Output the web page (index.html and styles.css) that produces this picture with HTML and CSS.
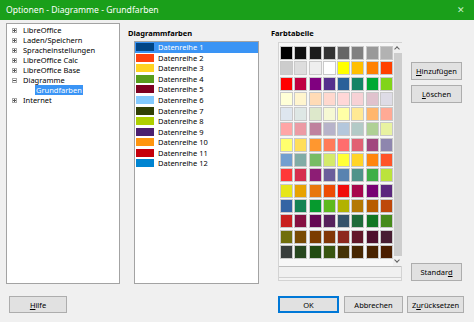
FILE: index.html
```html
<!DOCTYPE html>
<html lang="de">
<head>
<meta charset="utf-8">
<title>Optionen - Diagramme - Grundfarben</title>
<link rel="stylesheet" href="styles.css">
</head>
<body>
<div class="window">
  <div class="titlebar">
    <span class="title">Optionen - Diagramme - Grundfarben</span>
    <span class="close">✕</span>
  </div>
  <div class="main">
    <div class="tree">
      <div class="node"><span class="exp plus"></span><span class="lbl">LibreOffice</span></div>
      <div class="node"><span class="exp plus"></span><span class="lbl">Laden/Speichern</span></div>
      <div class="node"><span class="exp plus"></span><span class="lbl">Spracheinstellungen</span></div>
      <div class="node"><span class="exp plus"></span><span class="lbl">LibreOffice Calc</span></div>
      <div class="node"><span class="exp plus"></span><span class="lbl">LibreOffice Base</span></div>
      <div class="node"><span class="exp minus"></span><span class="lbl">Diagramme</span></div>
      <div class="node child"><span class="lbl sel">Grundfarben</span></div>
      <div class="node"><span class="exp plus"></span><span class="lbl">Internet</span></div>
    </div>
    <div class="col-series">
      <div class="grp-label">Diagrammfarben</div>
      <div class="series-list">
        <div class="srow selected"><span class="sw" style="background:#004586"></span>Datenreihe 1</div>
        <div class="srow"><span class="sw" style="background:#ff420e"></span>Datenreihe 2</div>
        <div class="srow"><span class="sw" style="background:#ffd320"></span>Datenreihe 3</div>
        <div class="srow"><span class="sw" style="background:#579d1c"></span>Datenreihe 4</div>
        <div class="srow"><span class="sw" style="background:#7e0021"></span>Datenreihe 5</div>
        <div class="srow"><span class="sw" style="background:#83caff"></span>Datenreihe 6</div>
        <div class="srow"><span class="sw" style="background:#314004"></span>Datenreihe 7</div>
        <div class="srow"><span class="sw" style="background:#aecf00"></span>Datenreihe 8</div>
        <div class="srow"><span class="sw" style="background:#4b1f6f"></span>Datenreihe 9</div>
        <div class="srow"><span class="sw" style="background:#ff950e"></span>Datenreihe 10</div>
        <div class="srow"><span class="sw" style="background:#c5000b"></span>Datenreihe 11</div>
        <div class="srow"><span class="sw" style="background:#0084d1"></span>Datenreihe 12</div>
      </div>
    </div>
    <div class="col-table">
      <div class="grp-label">Farbtabelle</div>
      <div class="table-frame">
        <div class="valueset">
          <div class="palette" id="palette"></div>
          <div class="vscroll">
            <span class="arrow up"></span>
            <span class="thumb"></span>
            <span class="arrow down"></span>
          </div>
        </div>
        <div class="strip"></div>
      </div>
    </div>
    <div class="col-buttons">
      <button class="btn"><u>H</u>inzufügen</button>
      <button class="btn"><u>L</u>öschen</button>
      <span class="spacer"></span>
      <button class="btn">Standar<u>d</u></button>
    </div>
  </div>
  <div class="footer">
    <button class="btn b-help"><u>H</u>ilfe</button>
    <span class="spacer"></span>
    <button class="btn b-ok">OK</button>
    <button class="btn b-cancel">Abbrechen</button>
    <button class="btn b-reset">Z<u>u</u>rücksetzen</button>
  </div>
</div>
<script src="app.js"></script>
</body>
</html>
```
FILE: app.js
```js
var colors = [
"000000","111111","1c1c1c","333333","666666","808080","999999","b2b2b2",
"cccccc","dddddd","eeeeee","ffffff","ffff00","ffbf00","ff8000","ff4000",
"ff0000","bf0041","800080","55308d","2a6099","158466","00a933","81d41a",
"ffffd7","fff5ce","ffdbb6","ffd8ce","ffd7d7","f7d1d5","e0c2cd","dedce6",
"dee6ef","dee7e5","dde8cb","f6f9d4","ffffa6","ffe994","ffb66c","ffaa95",
"ffa6a6","ec9ba4","bf819e","b7b3ca","b4c7dc","b3cac7","afd095","e8f2a1",
"ffff6d","ffde59","ff972f","ff7b59","ff6d6d","e16173","a1467e","8e86ae",
"729fcf","81aca6","77bc65","d4ea6b","ffff38","ffd428","ff860d","ff5429",
"ff3838","d62e4e","8d1d75","6b5e9b","5983b0","50938a","3faf46","bbe33d",
"e6e617","e8a202","e8770d","ed4c05","f10d0c","a7074b","780373","5b277d",
"3465a4","168253","069a2e","5eb91e","b2b200","b47804","b85c00","be480a",
"c9211e","861141","650953","55215b","355269","1e6a39","127622","468a1a",
"706e0c","784b04","7b3d00","813709","8d281e","611729","4e102d","481d32",
"383d3c","28471f","224b12","395511","443205","472702","492300","4b1e00"
];
var p = document.getElementById("palette");
colors.forEach(function (c) {
  var d = document.createElement("span");
  d.className = "cell";
  d.style.background = "#" + c;
  p.appendChild(d);
});
```
FILE: styles.css
```css
* { box-sizing: border-box; }
html, body { margin: 0; padding: 0; }
body {
  width: 474px;
  height: 322px;
  background: #f0f0f0;
  font-family: "Noto Sans", "Open Sans", sans-serif;
  font-size: 7.5px;
  color: #000;
  overflow: hidden;
}
.window { width: 474px; height: 322px; display: flex; flex-direction: column; }
.titlebar {
  height: 20px;
  background: #1a9f1a;
  color: #fff;
  display: flex;
  align-items: center;
  padding: 0 8px 1px 6px;
  font-size: 8.6px;
}
.title { flex: 1; }
.close { color: #c9f0c9; font-size: 9px; margin-right: 1px; }

.main { display: flex; padding: 3px 0 0 6px; height: 264px; }

.tree {
  width: 114px;
  height: 261px;
  background: #fff;
  border: 1px solid #a3a3a3;
  padding: 1px 0 0 5px;
}
.node { height: 10px; display: flex; align-items: center; }
.exp {
  width: 5px; height: 5px;
  border: 1px solid #a8a8a8;
  position: relative;
  margin-right: 6px;
  flex: none;
}
.exp::before { content: ""; position: absolute; left: 0; top: 1px; width: 3px; height: 1px; background: #555; }
.plus::after { content: ""; position: absolute; left: 1px; top: 0; width: 1px; height: 3px; background: #555; }
.node.child { padding-left: 23px; }
.lbl { line-height: 10px; white-space: nowrap; }
.lbl.sel { background: #3a94f5; color: #fff; padding: 0 1px; }

.col-series { margin-left: 8px; display: flex; flex-direction: column; }
.grp-label { font-weight: bold; height: 18px; padding-top: 3px; line-height: 15px; }
.series-list {
  margin-left: 6px;
  width: 125px;
  height: 243px;
  background: #fff;
  border: 1px solid #a3a3a3;
}
.srow { height: 10.55px; display: flex; align-items: center; padding-left: 1px; white-space: nowrap; }
.srow.selected { background: #3a94f5; color: #fff; }
.sw { width: 18px; height: 8px; margin-right: 4px; flex: none; }

.col-table { margin-left: 12px; display: flex; flex-direction: column; }
.table-frame {
  margin-left: 7px;
  margin-top: 1px;
  width: 124px;
  height: 239px;
  border: 1px solid #d3d3d3;
  background: #f3f3f3;
}
.valueset {
  height: 224px;
  background: #f7f7f7;
  border-bottom: 1px solid #bdbdbd;
  display: flex;
  padding: 4px 0 0 2px;
}
.palette {
  display: grid;
  grid-template-columns: repeat(8, 11px);
  grid-auto-rows: 12px;
  column-gap: 3.3px;
  row-gap: 3.3px;
  width: 111px;
}
.cell { display: block; box-shadow: 0 0 0 1px #c9c9c9; }
.vscroll {
  margin-left: 1px;
  width: 9px;
  margin-top: -4px;
  height: 223px;
  display: flex;
  flex-direction: column;
  align-items: center;
  background: #f0f0f0;
}
.arrow { width: 9px; height: 9px; position: relative; flex: none; }
.arrow::before {
  content: ""; position: absolute; left: 2px; width: 3px; height: 3px;
  border-left: 1px solid #606060; border-top: 1px solid #606060;
}
.arrow.up::before { top: 4px; transform: rotate(45deg); }
.arrow.down::before { top: 1px; transform: rotate(225deg); }
.thumb { flex: 1; width: 8px; background: #cdcdcd; margin: 1px 0; }
.strip { height: 11px; border-bottom: 1px solid #d0d0d0; background: #f0f0f0; }

.col-buttons {
  margin-left: 9px;
  display: flex;
  flex-direction: column;
  gap: 5px;
  padding-top: 39px;
  height: 258px;
}
.spacer { flex: 1; }
.btn {
  font-family: inherit;
  font-size: 7.5px;
  background: #e1e1e1;
  border: 1px solid #adadad;
  color: #000;
  padding: 0;
  height: 18px;
  width: 51px;
  margin: 0;
}
.footer { display: flex; padding: 12px 0 0 9px; gap: 4px; height: 30px; }
.footer .btn { height: 17px; }
.b-help { width: 58px; }
.b-ok { width: 61px; border-color: #0078d7; box-shadow: inset 0 0 0 1px #0078d7; }
.b-cancel { width: 59px; margin-left: 1px; }
.b-reset { width: 57px; margin-right: 10px; }
```
